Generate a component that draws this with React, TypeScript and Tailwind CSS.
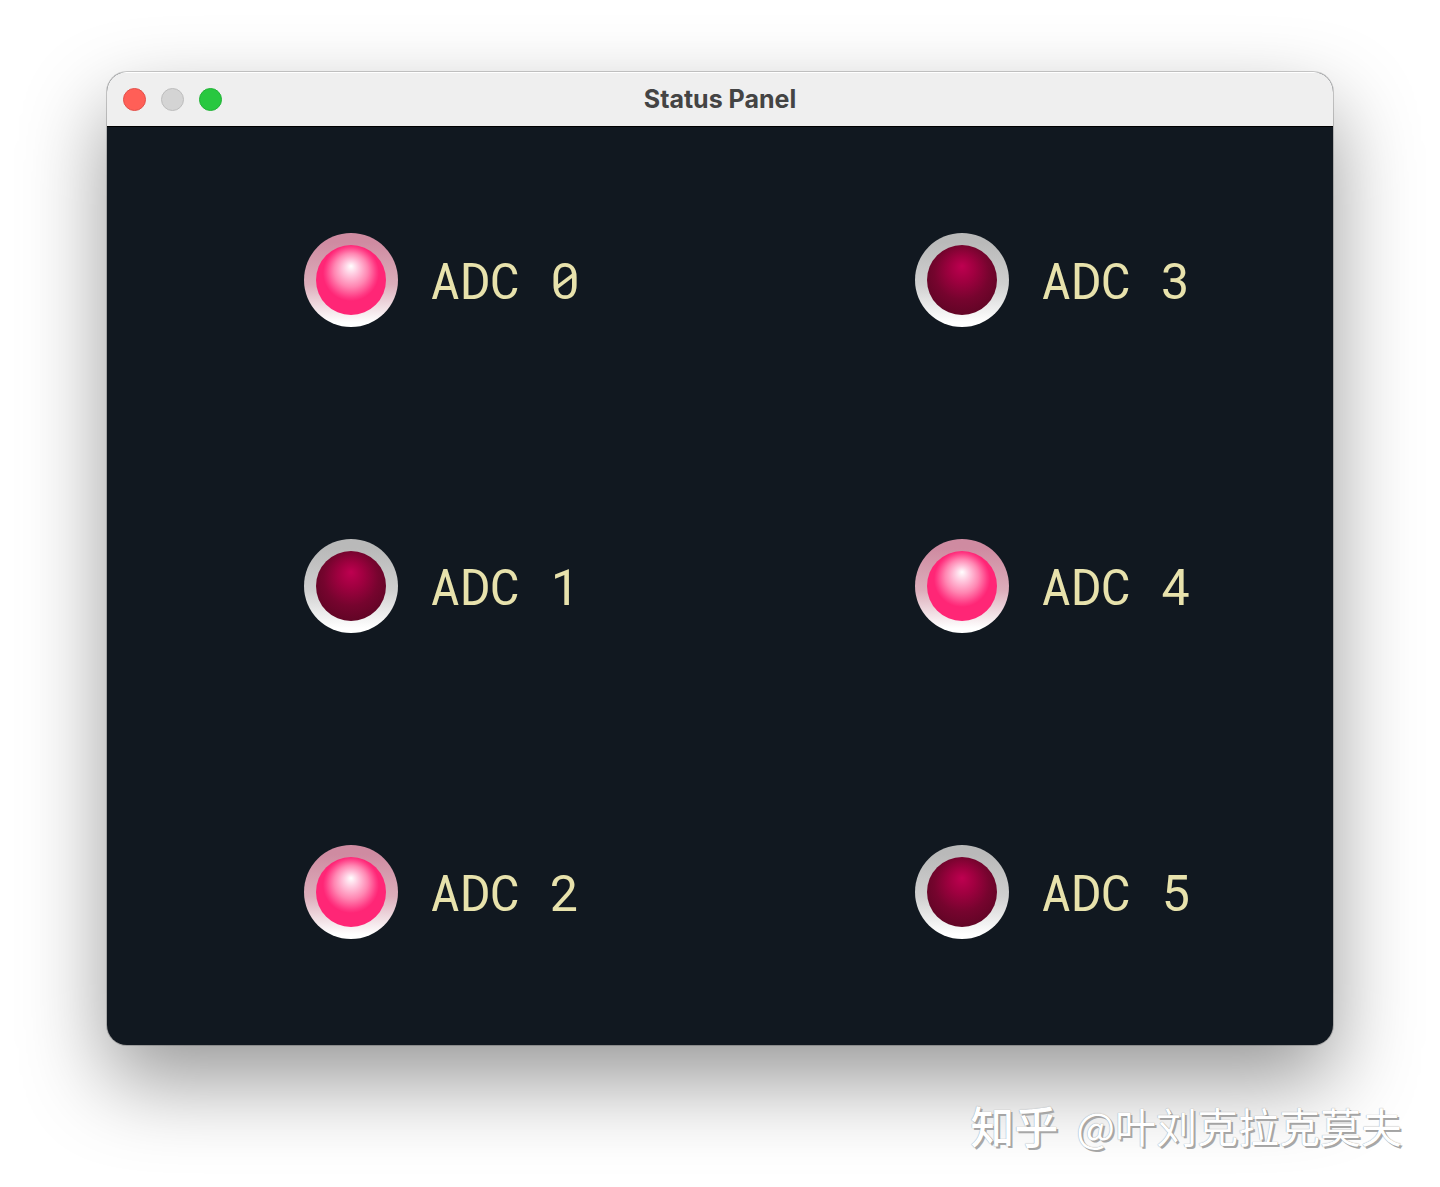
/**
 * Status Panel
 *
 * Desktop window with one indicator light per ADC channel.
 */

import { useId } from 'react'

interface Channel {
    label: string
    active: boolean
}

const channels: Channel[] = [
    { label: 'ADC 0', active: true },
    { label: 'ADC 1', active: false },
    { label: 'ADC 2', active: true },
    { label: 'ADC 3', active: false },
    { label: 'ADC 4', active: true },
    { label: 'ADC 5', active: false },
]

function TitleBar({ title }: { title: string }) {
    return (
        <header className="grid grid-cols-[1fr_auto_1fr] items-center bg-[#efefef] border-t border-white px-4 h-[54px]">
            <div className="flex gap-[15px]">
                <button
                    type="button"
                    aria-label="Close"
                    className="size-[23px] rounded-full border border-[#e2504a] bg-[#ff5f57]"
                />
                <button
                    type="button"
                    aria-label="Minimize"
                    className="size-[23px] rounded-full border border-[#bdbdbd] bg-[#d4d4d4]"
                />
                <button
                    type="button"
                    aria-label="Zoom"
                    className="size-[23px] rounded-full border border-[#22b337] bg-[#28c840]"
                />
            </div>
            <h1 className="pb-[2px] font-['Inter',sans-serif] text-[25px] leading-8 font-bold text-[#444444]">
                {title}
            </h1>
        </header>
    )
}

function Led({ active }: { active: boolean }) {
    const id = useId()
    const ringId = `${id}-ring`
    const lampId = `${id}-lamp`

    return (
        <svg
            role="img"
            aria-label={active ? 'On' : 'Off'}
            viewBox="0 0 94 94"
            className="size-[94px] shrink-0"
        >
            <defs>
                <linearGradient id={ringId} x1="0" y1="0" x2="0" y2="1">
                    <stop offset="0.1" stopColor={active ? '#cf8ba1' : '#b9b9b9'} />
                    <stop offset="0.55" stopColor={active ? '#dcaebb' : '#d0d0d0'} />
                    <stop offset="0.95" stopColor="#ffffff" />
                </linearGradient>
                {active ? (
                    <radialGradient id={lampId} gradientUnits="userSpaceOnUse" cx="47" cy="40" r="28" fx="47" fy="33">
                        <stop offset="0" stopColor="#ffffff" />
                        <stop offset="0.25" stopColor="#ffcbe0" />
                        <stop offset="0.6" stopColor="#ff86b2" />
                        <stop offset="0.9" stopColor="#ff3a84" />
                        <stop offset="1" stopColor="#ff2676" />
                    </radialGradient>
                ) : (
                    <radialGradient id={lampId} gradientUnits="userSpaceOnUse" cx="47" cy="43" r="42" fx="47" fy="33">
                        <stop offset="0" stopColor="#be0050" />
                        <stop offset="0.3" stopColor="#a00040" />
                        <stop offset="0.65" stopColor="#76042e" />
                        <stop offset="1" stopColor="#5e0524" />
                    </radialGradient>
                )}
            </defs>
            <circle cx="47" cy="47" r="47" fill={`url(#${ringId})`} />
            <circle cx="47" cy="47" r="35" fill={`url(#${lampId})`} />
        </svg>
    )
}

function ChannelStatus({ label, active }: Channel) {
    return (
        <li className="flex items-center gap-8 py-[106px] pl-[197px]">
            <Led active={active} />
            <span className="font-['Roboto_Mono','DejaVu_Sans_Mono',monospace] text-[50px] leading-[60px] whitespace-nowrap text-[#e8e2ac]">
                {label}
            </span>
        </li>
    )
}

export default function App() {
    return (
        <div className="bg-white pt-[72px]">
            {/* Window */}
            <main className="mx-[107px] overflow-hidden rounded-[20px] bg-[#111820] shadow-[0_0_0_1px_#00000030,0_36px_84px_#00000068]">
                <TitleBar title="Status Panel" />
                <ul className="grid grid-flow-col grid-cols-2 grid-rows-3 border-t border-black pr-1">
                    {channels.map((channel) => (
                        <ChannelStatus key={channel.label} {...channel} />
                    ))}
                </ul>
            </main>

            {/* Watermark */}
            <footer className="relative flex items-center justify-end gap-[18px] pt-12 pr-[38px] pb-[30px] font-['Noto_Sans_CJK_SC',sans-serif] leading-[64px] text-white [text-shadow:0_0_1px_#808080,2px_2px_0_#a8a8a8]">
                <span className="text-[44px] font-medium">知乎</span>
                <span className="text-[41px]">@叶刘克拉克莫夫</span>
            </footer>
        </div>
    )
}
